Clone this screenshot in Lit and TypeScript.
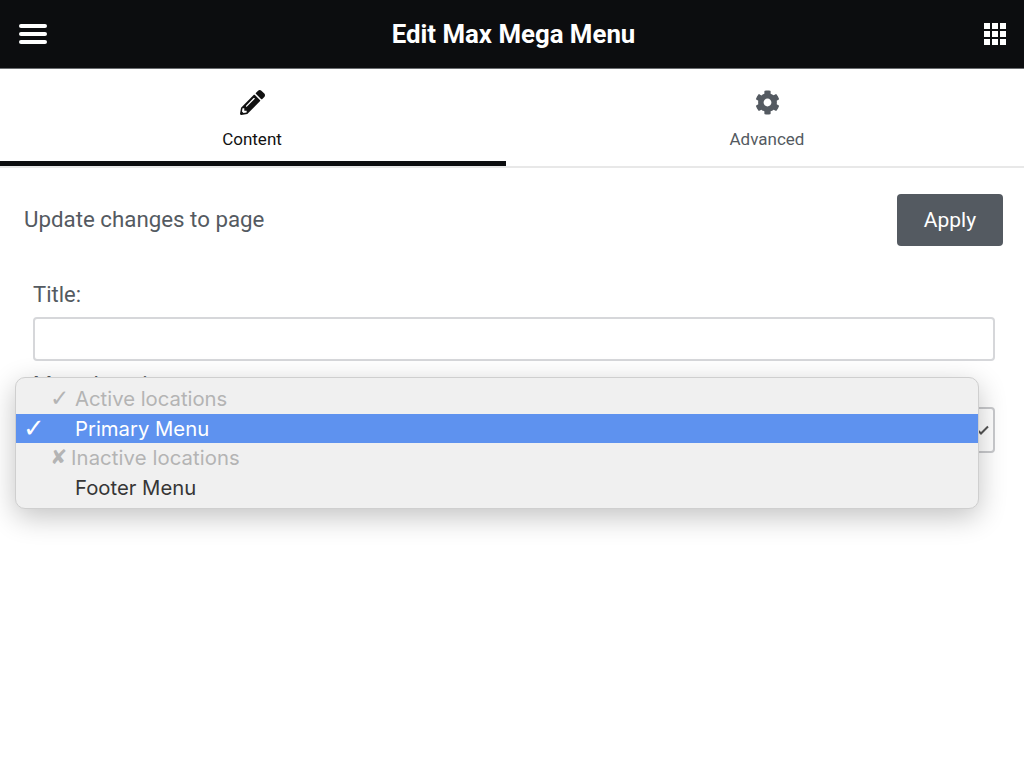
import { LitElement, html, css } from "lit";
import { customElement } from "lit/decorators.js";

@customElement("app-root")
export class AppRoot extends LitElement {
  static styles = css`
    :host { display: block; width: 1024px; height: 784px; background: #fff; font-family: Roboto, "Liberation Sans", sans-serif; position: relative; overflow: hidden; }
    .head { height: 69px; background: #0c0d0f; border-bottom: 1px solid #6b6d70; box-sizing: border-box; display: flex; align-items: center; padding: 0 18px 1px 19px; color: #fff; }
    .head h1 { margin: 0; flex: 1; text-align: center; font-size: 25.8px; font-weight: 700; line-height: 30px; padding-right: 4px; }
    .burger { width: 28px; display: flex; flex-direction: column; gap: 4px; }
    .burger i { display: block; height: 4px; border-radius: 2px; background: #fff; }
    .grid { display: grid; grid-template-columns: repeat(3, 6px); gap: 2px; }
    .grid i { display: block; height: 6px; background: #fff; }
    .tabs { display: flex; height: 99px; border-bottom: 2px solid #e8e8e8; box-sizing: border-box; }
    .tab { flex: 0 0 506px; display: flex; flex-direction: column; align-items: center; padding: 21px 2px 0 0; box-sizing: border-box; color: #545a61; font-size: 17px; line-height: 20px; gap: 14px; height: 98px; }
    .tab + .tab { flex: 1; height: 97px; padding: 21px 0 0 4px; }
    .tab.on { color: #111; border-bottom: 5px solid #0c0d0f; height: 97px; }
    .tab svg { width: 25px; height: 25px; fill: currentColor; display: block; }
    .update { display: flex; justify-content: space-between; align-items: center; padding: 26px 21px 0 24px; font-size: 22.3px; color: #545a61; }
    .update span { padding-bottom: 2px; }
    .apply { width: 106px; height: 52px; border-radius: 4px; background: #545a61; color: #fff; display: flex; align-items: center; justify-content: center; font-size: 21px; }
    .form { padding: 33px 29px 0 33px; color: #545a61; font-size: 22px; }
    .lab { line-height: 32px; height: 24px; }
    .field { height: 44px; border: 2px solid #d6d7da; border-radius: 4px; box-sizing: border-box; margin-top: 14px; }
    .lab2 { line-height: 30px; margin-top: 9px; height: 30px; }
    .select { height: 46px; border: 2px solid #c9cacd; border-radius: 4px; box-sizing: border-box; margin-top: 7px; display: flex; justify-content: flex-end; align-items: center; padding-right: 4px; }
    .select svg { width: 12px; height: 10px; }
    .pop { position: absolute; left: 15px; top: 377px; width: 964px; height: 132px; box-sizing: border-box; background: #f0f0f0; border: 1px solid #cfcfcf; border-radius: 10px; box-shadow: 0 8px 28px rgba(0,0,0,.24); padding-top: 6px; font-family: Inter, Roboto, sans-serif; font-size: 20.3px; color: #363636; overflow: hidden; }
    .row { height: 29.5px; line-height: 29.5px; padding-left: 59px; position: relative; white-space: nowrap; }
    .row.dis { color: #b4b4b4; }
    .row.sel { background: #5e92ef; color: #fff; }
    .glyph { position: absolute; top: 0; font-family: "DejaVu Sans", sans-serif; }
    .g1 { left: 34px; font-size: 23px; }
    .g2 { left: 7px; font-size: 26px; }
    .g3 { left: 34px; }
    .ind { padding-left: 55px; letter-spacing: .1px; }
  `;

  render() {
    return html`
      <div class="head">
        <div class="burger"><i></i><i></i><i></i></div>
        <h1>Edit Max Mega Menu</h1>
        <div class="grid">${[...Array(9)].map(() => html`<i></i>`)}</div>
      </div>
      <div class="tabs">
        <div class="tab on">
          <svg viewBox="0 0 512 512"><path d="M497.9 142.1l-46.1 46.1c-4.7 4.7-12.3 4.7-17 0l-111-111c-4.7-4.7-4.7-12.3 0-17l46.1-46.1c18.7-18.7 49.1-18.7 67.9 0l60.1 60.1c18.8 18.7 18.8 49.1 0 67.9zM284.2 99.8L21.6 362.4.4 483.9c-2.9 16.4 11.4 30.6 27.8 27.8l121.5-21.3 262.6-262.6c4.7-4.7 4.7-12.3 0-17l-111-111c-4.8-4.7-12.4-4.7-17.1 0zM124.1 339.9c-5.5-5.5-5.5-14.3 0-19.8l154-154c5.5-5.5 14.3-5.5 19.8 0s5.5 14.3 0 19.8l-154 154c-5.5 5.5-14.3 5.5-19.8 0zM88 424h48v36.3l-64.5 11.3-31.1-31.1L51.7 376H88v48z"/></svg>
          <span>Content</span>
        </div>
        <div class="tab">
          <svg viewBox="0 0 512 512"><path d="M487.4 315.7l-42.6-24.6c4.3-23.2 4.3-47 0-70.2l42.6-24.6c4.9-2.8 7.1-8.6 5.5-14-11.1-35.6-30-67.8-54.7-94.6-3.8-4.1-10-5.1-14.8-2.3L380.8 110c-17.9-15.4-38.5-27.3-60.8-35.1V25.8c0-5.6-3.9-10.5-9.4-11.7-36.7-8.2-74.3-7.8-109.2 0-5.5 1.2-9.4 6.1-9.4 11.7V75c-22.2 7.9-42.8 19.8-60.8 35.1L88.7 85.5c-4.9-2.8-11-1.9-14.8 2.3-24.7 26.7-43.6 58.9-54.7 94.6-1.7 5.4.6 11.2 5.5 14L67.3 221c-4.3 23.2-4.3 47 0 70.2l-42.6 24.6c-4.9 2.8-7.1 8.6-5.5 14 11.1 35.6 30 67.8 54.7 94.6 3.8 4.1 10 5.1 14.8 2.3l42.6-24.6c17.9 15.4 38.5 27.3 60.8 35.1v49.2c0 5.6 3.9 10.5 9.4 11.7 36.7 8.2 74.3 7.8 109.2 0 5.5-1.2 9.4-6.1 9.4-11.7v-49.2c22.2-7.9 42.8-19.8 60.8-35.1l42.6 24.6c4.9 2.8 11 1.9 14.8-2.3 24.7-26.7 43.6-58.9 54.7-94.6 1.5-5.5-.7-11.3-5.6-14.1zM256 336c-44.1 0-80-35.9-80-80s35.9-80 80-80 80 35.9 80 80-35.9 80-80 80z"/></svg>
          <span>Advanced</span>
        </div>
      </div>
      <div class="update"><span>Update changes to page</span><div class="apply">Apply</div></div>
      <div class="form">
        <div class="lab">Title:</div>
        <div class="field"></div>
        <div class="lab2">Menu location:</div>
        <div class="select"><svg viewBox="0 0 12 10"><path d="M1 5.5 L4 8.5 L11 1.5" fill="none" stroke="#555" stroke-width="2"/></svg></div>
      </div>
      <div class="pop">
        <div class="row dis"><span class="glyph g1">✓</span>Active locations</div>
        <div class="row sel"><span class="glyph g2">✓</span>Primary Menu</div>
        <div class="row dis ind"><span class="glyph g3">✘</span>Inactive locations</div>
        <div class="row">Footer Menu</div>
      </div>
    `;
  }
}
